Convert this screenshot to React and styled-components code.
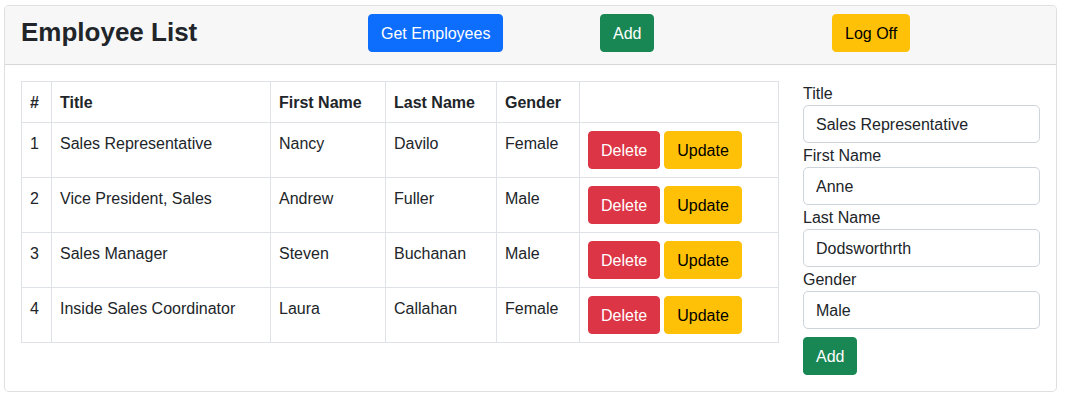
import React from "react";
import styled, { createGlobalStyle } from "styled-components";

const GlobalStyle = createGlobalStyle`
  body {
    margin: 0;
    background: #fff;
    color: #212529;
    font-family: "Segoe UI", "Liberation Sans", Arial, sans-serif;
    font-size: 16px;
    line-height: 1.5;
  }
  * {
    box-sizing: border-box;
  }
`;

const Page = styled.div`
  padding: 5px 10px 0 4px;
`;

const Card = styled.div`
  border: 1px solid rgba(0, 0, 0, 0.125);
  border-radius: 5px;
  background: #fff;
`;

const Header = styled.div`
  display: grid;
  grid-template-columns: 347px 232px 232px 1fr;
  align-items: start;
  padding: 8px 16px;
  background: #f7f7f7;
  border-bottom: 1px solid rgba(0, 0, 0, 0.125);
  border-radius: 4px 4px 0 0;
`;

const Heading = styled.h3`
  margin: 0 0 8px;
  padding-top: 3px;
  height: 33.6px;
  font-size: 26px;
  font-weight: 700;
  line-height: 1.2;
  color: #212529;
`;

const colors = {
  primary: { bg: "#0d6efd", fg: "#fff" },
  success: { bg: "#198754", fg: "#fff" },
  danger: { bg: "#dc3545", fg: "#fff" },
  warning: { bg: "#ffc107", fg: "#000" },
};

const Button = styled.button`
  display: inline-block;
  height: 38px;
  padding: 7px 12px 5px;
  border: 1px solid ${(p) => colors[p.$variant].bg};
  border-radius: 4px;
  background: ${(p) => colors[p.$variant].bg};
  color: ${(p) => colors[p.$variant].fg};
  font-family: inherit;
  font-size: 16px;
  line-height: 24px;
  cursor: pointer;
`;

const Body = styled.div`
  display: grid;
  grid-template-columns: 757px 1fr;
  column-gap: 25px;
  align-items: start;
  padding: 16px;
`;

const Table = styled.table`
  width: 757px;
  border-collapse: collapse;
  table-layout: fixed;
  margin-bottom: 16px;

  th,
  td {
    border: 1px solid #dee2e6;
    padding: 9px 8px 7px;
    text-align: left;
    vertical-align: top;
  }

  td:last-child {
    padding: 8px;
  }

  th {
    font-weight: 700;
  }
`;

const Actions = styled.div`
  display: flex;
  gap: 4px;
`;

const Form = styled.form`
  display: flex;
  flex-direction: column;
`;

const Label = styled.label`
  display: block;
  height: 24px;
  padding-top: 1px;
`;

const Input = styled.input`
  display: block;
  width: 100%;
  height: 38px;
  padding: 7px 12px 5px;
  border: 1px solid #ced4da;
  border-radius: 5px;
  font-family: inherit;
  font-size: 16px;
  color: #212529;
  background: #fff;
`;

const SubmitRow = styled.div`
  margin-top: 8px;
`;

const employees = [
  { id: 1, title: "Sales Representative", first: "Nancy", last: "Davilo", gender: "Female" },
  { id: 2, title: "Vice President, Sales", first: "Andrew", last: "Fuller", gender: "Male" },
  { id: 3, title: "Sales Manager", first: "Steven", last: "Buchanan", gender: "Male" },
  { id: 4, title: "Inside Sales Coordinator", first: "Laura", last: "Callahan", gender: "Female" },
];

const fields = [
  { label: "Title", value: "Sales Representative" },
  { label: "First Name", value: "Anne" },
  { label: "Last Name", value: "Dodsworthrth" },
  { label: "Gender", value: "Male" },
];

export default function App() {
  return (
    <Page>
      <GlobalStyle />
      <Card>
        <Header>
          <Heading>Employee List</Heading>
          <div>
            <Button $variant="primary">Get Employees</Button>
          </div>
          <div>
            <Button $variant="success">Add</Button>
          </div>
          <div>
            <Button $variant="warning">Log Off</Button>
          </div>
        </Header>
        <Body>
          <Table>
            <colgroup>
              <col style={{ width: 30 }} />
              <col style={{ width: 219 }} />
              <col style={{ width: 115 }} />
              <col style={{ width: 111 }} />
              <col style={{ width: 83 }} />
              <col style={{ width: 199 }} />
            </colgroup>
            <thead>
              <tr>
                <th>#</th>
                <th>Title</th>
                <th>First Name</th>
                <th>Last Name</th>
                <th>Gender</th>
                <th></th>
              </tr>
            </thead>
            <tbody>
              {employees.map((e) => (
                <tr key={e.id}>
                  <td>{e.id}</td>
                  <td>{e.title}</td>
                  <td>{e.first}</td>
                  <td>{e.last}</td>
                  <td>{e.gender}</td>
                  <td>
                    <Actions>
                      <Button $variant="danger">Delete</Button>
                      <Button $variant="warning">Update</Button>
                    </Actions>
                  </td>
                </tr>
              ))}
            </tbody>
          </Table>
          <Form onSubmit={(ev) => ev.preventDefault()}>
            {fields.map((f) => (
              <React.Fragment key={f.label}>
                <Label>{f.label}</Label>
                <Input defaultValue={f.value} />
              </React.Fragment>
            ))}
            <SubmitRow>
              <Button $variant="success">Add</Button>
            </SubmitRow>
          </Form>
        </Body>
      </Card>
    </Page>
  );
}
